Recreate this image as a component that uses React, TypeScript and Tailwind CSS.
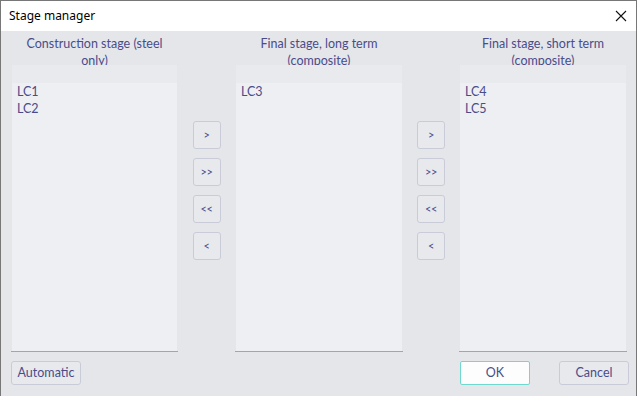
import React from "react";

const txt = "text-[#4a4c8a]";

function Column({ label, items }: { label: string; items: string[] }) {
  return (
    <div className="flex flex-col w-full">
      <div className={`h-[30px] overflow-hidden text-center leading-[17px] px-[8px] ${txt}`}>{label}</div>
      <div className="h-[287px] px-[1px] border-b border-[#a3a5ad] flex">
        <div className="flex-1 bg-[#eeeff3] flex flex-col">
          <div className="h-[18px] bg-[#e8eaee] shrink-0" />
          <div className="flex flex-col pl-[5px]">
            {items.map((it) => (
              <div key={it} className={`leading-[17px] text-[12.5px] ${txt}`}>{it}</div>
            ))}
          </div>
        </div>
      </div>
    </div>
  );
}

function Arrows() {
  const labels = [">", ">>", "<<", "<"];
  return (
    <div className="flex flex-col items-center pt-[86px] gap-[9px] shrink-0 w-full">
      {labels.map((l) => (
        <div
          key={l}
          className={`w-[28px] h-[28px] border border-[#c9cbd8] rounded-[3px] bg-[#e7e9ed] flex items-center justify-center text-[11px] tracking-[-0.5px] ${txt}`}
        >
          {l}
        </div>
      ))}
    </div>
  );
}

export default function App() {
  return (
    <div
      className="w-[637px] h-[396px] border-x border-t border-[#777] flex flex-col overflow-hidden"
      style={{ fontFamily: "Lato, 'Noto Sans', sans-serif" }}
    >
      <div className="h-[30px] bg-white flex items-center shrink-0 pl-[8px] pr-[8px]">
        <span className="text-[12px] text-black" style={{ fontFamily: "'Noto Sans', sans-serif" }}>
          Stage manager
        </span>
        <svg className="ml-auto mr-[1px]" width="12" height="12" viewBox="0 0 12 12">
          <path d="M1 1 L11 11 M11 1 L1 11" stroke="#111" strokeWidth="1.1" />
        </svg>
      </div>
      <div className="flex-1 bg-[#e4e6ea] flex flex-col text-[12.5px]">
        <div className="flex pl-[10px] pr-[9px] pt-[4px]">
          <div className="w-[167px] shrink-0">
            <Column label="Construction stage (steel only)" items={["LC1", "LC2"]} />
          </div>
          <div className="w-[57px] shrink-0">
            <Arrows />
          </div>
          <div className="w-[168px] shrink-0">
            <Column label="Final stage, long term (composite)" items={["LC3"]} />
          </div>
          <div className="w-[56px] shrink-0">
            <Arrows />
          </div>
          <div className="w-[168px] shrink-0">
            <Column label="Final stage, short term (composite)" items={["LC4", "LC5"]} />
          </div>
        </div>
        <div className="flex items-center mt-[9px] pl-[10px] pr-[7px]">
          <div className={`w-[70px] h-[24px] border border-[#c9cbd8] rounded-[3px] bg-[#e7e9ed] flex items-center justify-center ${txt}`}>
            Automatic
          </div>
          <div className={`ml-auto w-[70px] h-[24px] border border-[#6fd8cf] rounded-[2px] bg-[#fdfdfd] flex items-center justify-center ${txt}`}>
            OK
          </div>
          <div className={`ml-[29px] w-[70px] h-[24px] border border-[#c9cbd8] rounded-[3px] bg-[#e7e9ed] flex items-center justify-center ${txt}`}>
            Cancel
          </div>
        </div>
      </div>
    </div>
  );
}
